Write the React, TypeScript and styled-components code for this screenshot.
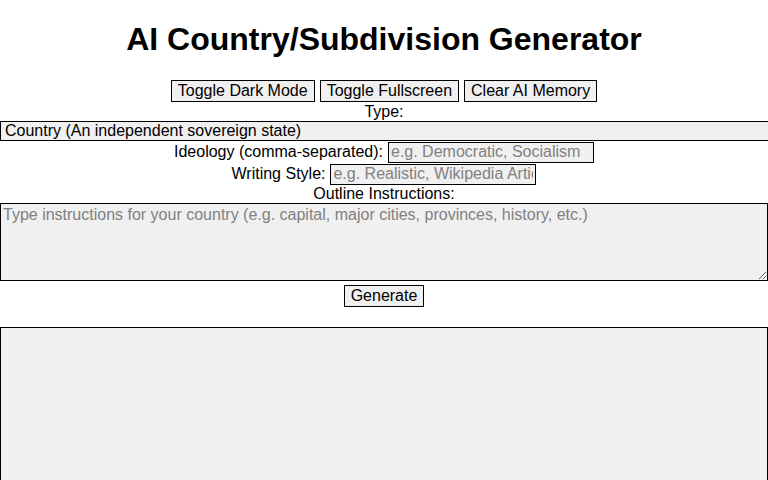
import styled, { createGlobalStyle } from 'styled-components';

const GlobalStyle = createGlobalStyle`
  html, body {
    margin: 0;
    padding: 0;
    background: #fff;
    overflow-x: hidden;
  }
  body {
    font-family: 'Liberation Sans', Arial, sans-serif;
    font-size: 16px;
    color: #000;
  }
`;

const Page = styled.div`
  display: flex;
  flex-direction: column;
  align-items: center;
  text-align: center;
  overflow: hidden;
`;

const Title = styled.h1`
  margin: 21px 0 22px;
  font-size: 32px;
  line-height: 37px;
  font-weight: bold;
`;

const Toolbar = styled.div`
  display: flex;
  gap: 5px;
  justify-content: center;
`;

const Button = styled.button`
  font-family: 'Liberation Sans', Arial, sans-serif;
  font-size: 16px;
  line-height: 18px;
  padding: 1px 6px;
  background: #f0f0f0;
  color: #000;
  border: 1px solid #000;
  border-radius: 0;
  cursor: pointer;
`;

const Label = styled.label<{ $tall?: boolean }>`
  display: block;
  line-height: ${({ $tall }) => ($tall ? '19px' : '18px')};
`;

const Select = styled.select`
  appearance: none;
  align-self: flex-start;
  box-sizing: border-box;
  width: 100%;
  min-width: 780px;
  height: 20px;
  padding: 0 4px;
  margin: 0;
  font-family: 'Liberation Sans', Arial, sans-serif;
  font-size: 16px;
  line-height: 18px;
  color: #000;
  background: #f0f0f0;
  border: 1px solid #000;
  border-radius: 0;
`;

const Row = styled.div`
  display: flex;
  align-items: center;
  justify-content: center;
  gap: 5px;
  height: 22px;
`;

const TextInput = styled.input`
  width: 206px;
  height: 21px;
  box-sizing: border-box;
  padding: 1px 2px;
  font-family: 'Liberation Sans', Arial, sans-serif;
  font-size: 16px;
  background: #f0f0f0;
  border: 1px solid #000;
  border-radius: 0;
  &::placeholder {
    color: #808080;
  }
`;

const Instructions = styled.textarea`
  align-self: stretch;
  box-sizing: border-box;
  height: 78px;
  padding: 1px 2px;
  margin: 0;
  font-family: 'Liberation Sans', Arial, sans-serif;
  font-size: 16px;
  line-height: 19px;
  background: #f0f0f0;
  border: 1px solid #000;
  border-radius: 0;
  &::placeholder {
    color: #808080;
  }
`;

const GenerateButton = styled(Button)`
  margin: 4px 0 20px;
`;

const Output = styled.div`
  align-self: stretch;
  box-sizing: border-box;
  min-height: 300px;
  background: #f0f0f0;
  border: 1px solid #000;
`;

export default function App() {
  return (
    <>
      <GlobalStyle />
      <Page>
        <Title>AI Country/Subdivision Generator</Title>
        <Toolbar>
          <Button>Toggle Dark Mode</Button>
          <Button>Toggle Fullscreen</Button>
          <Button>Clear AI Memory</Button>
        </Toolbar>
        <Label $tall htmlFor='type'>Type:</Label>
        <Select id='type' defaultValue='country'>
          <option value='country'>Country (An independent sovereign state)</option>
          <option value='subdivision'>Subdivision</option>
        </Select>
        <Row>
          <Label htmlFor='ideology'>Ideology (comma-separated):</Label>
          <TextInput id='ideology' placeholder='e.g. Democratic, Socialism' />
        </Row>
        <Row>
          <Label htmlFor='style'>Writing Style:</Label>
          <TextInput id='style' placeholder='e.g. Realistic, Wikipedia Article' />
        </Row>
        <Label htmlFor='outline'>Outline Instructions:</Label>
        <Instructions
          id='outline'
          placeholder='Type instructions for your country (e.g. capital, major cities, provinces, history, etc.)'
        />
        <GenerateButton>Generate</GenerateButton>
        <Output />
      </Page>
    </>
  );
}
